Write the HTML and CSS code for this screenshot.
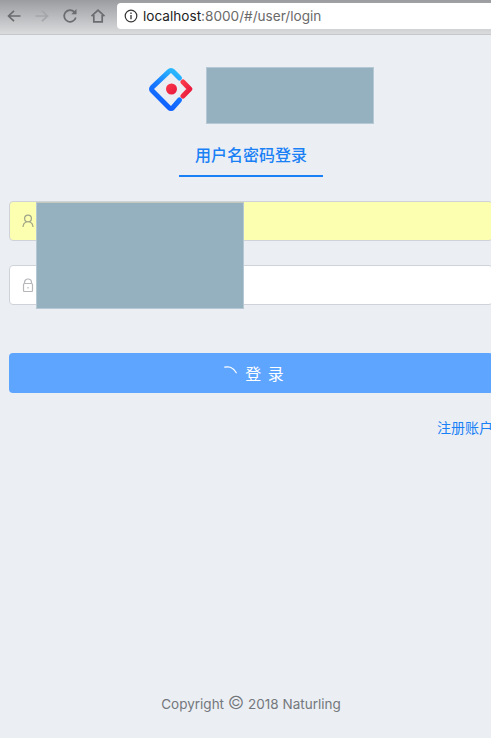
FILE: index.html
```html
<!DOCTYPE html>
<html lang="zh">
<head>
<meta charset="utf-8">
<title>Login</title>
<link rel="stylesheet" href="styles.css">
</head>
<body>
<div class="toolbar">
  <svg class="nav" width="16" height="16" viewBox="0 0 16 16"><path d="M14.500 8H2.500M8 2.800 2.500 8 8 13.200" class="st"/></svg>
  <svg class="nav fwd" width="16" height="16" viewBox="0 0 16 16"><path d="M1.500 8h12M8 2.800 13.500 8 8 13.200" class="st"/></svg>
  <svg class="nav reload" width="16" height="16" viewBox="0 0 16 16"><path d="M13.800 9.500A5.900 5.900 0 1 1 12.300 3.800" class="st"/><path d="M14.500 1v5.200H9.300z" class="fl"/></svg>
  <svg class="nav home" width="16" height="16" viewBox="0 0 16 16"><path d="M1.500 8.200 8 2.200l6.500 6M3.800 7v6.800h8.400V7" class="st"/></svg>
  <div class="omnibox">
    <svg width="14" height="14" viewBox="0 0 14 14"><circle cx="7" cy="7" r="5.800" fill="none" stroke="#333" stroke-width="1.200"/><path d="M7 6v4.200M7 3.600v1.300" stroke="#333" stroke-width="1.300"/></svg>
    <span class="url"><b>localhost</b>:8000/#/user/login</span>
  </div>
</div>
<main class="login">
  <div class="brand">
    <svg class="logo" width="44" height="44" viewBox="0 0 44 44">
      <defs>
        <linearGradient id="blue" x1="0.700" y1="0" x2="0.300" y2="1"><stop offset="0" stop-color="#29b6ff"/><stop offset="0.500" stop-color="#1677ff"/><stop offset="1" stop-color="#0f5bff"/></linearGradient>
        <linearGradient id="red" x1="0" y1="0" x2="1" y2="1"><stop offset="0" stop-color="#fa3a4a"/><stop offset="1" stop-color="#e8173c"/></linearGradient>
      </defs>
      <path d="M30.500 11 23.800 4.300a2.500 2.500 0 0 0-3.600 0L3.300 20.200a2.500 2.500 0 0 0 0 3.600L20.200 40.700a2.500 2.500 0 0 0 3.600 0L30.500 33" fill="none" stroke="url(#blue)" stroke-width="5" stroke-linecap="round" stroke-linejoin="round"/>
      <path d="M34 15l6.800 7-6.800 7" fill="none" stroke="url(#red)" stroke-width="5" stroke-linecap="round" stroke-linejoin="round"/>
      <circle cx="22.500" cy="22" r="5.500" fill="url(#red)"/>
    </svg>
    <div class="brand-name"></div>
  </div>
  <div class="tabs"><span class="tab">用户名密码登录</span></div>
  <div class="field autofill">
    <svg class="ficon" width="14" height="14" viewBox="0 0 14 14"><circle cx="7" cy="4.500" r="3.400" class="ic"/><path d="M2 13c.2-2.800 1.800-4.600 3.500-5M12 13c-.2-2.800-1.800-4.600-3.500-5" class="ic"/></svg>
  </div>
  <div class="field pwd">
    <svg class="ficon" width="14" height="14" viewBox="0 0 14 14"><rect x="2.500" y="5.500" width="9" height="8" rx="1" class="ic2"/><path d="M3.500 5.500V4.500a3.500 3.500 0 0 1 7 0v1" class="ic2"/><path d="M7 9v1.500" class="ic2"/></svg>
  </div>
  <div class="submit">
    <svg class="spin" width="13" height="8" viewBox="0 0 13 8"><path d="M0.700 1.200C4.500 0.200 9.500 1.500 12.300 6.800" fill="none" stroke="#fff" stroke-width="1.200" stroke-linecap="round"/></svg>
    <span class="submit-label">登 录</span>
  </div>
  <div class="links"><a class="register">注册账户</a></div>
  <div class="redact"></div>
  <footer class="copy">Copyright <span class="cc">©</span> 2018 Naturling</footer>
</main>
</body>
</html>
```
FILE: styles.css
```css
html, body { margin: 0; padding: 0; }
body {
  width: 491px;
  height: 738px;
  overflow: hidden;
  background: #ebeff4;
  font-family: "Noto Sans CJK SC", Inter, sans-serif;
}
.toolbar {
  height: 35px;
  box-sizing: border-box;
  display: flex;
  align-items: center;
  padding: 3px 0 5px 6px;
  background: linear-gradient(#9a9c9f 0, #a6a8ab 6px, #dadbdd 34px);
  border-bottom: 1px solid #c6c7c9;
}
.nav { flex: none; margin-right: 12px; }
.st { fill: none; stroke: #6a6c6f; stroke-width: 1.700; }
.fl { fill: #6a6c6f; }
.fwd .st { stroke: #a4a6a9; }
.home { margin-right: 11px; }
.omnibox {
  flex: 1;
  height: 26px;
  background: #fff;
  border-radius: 4px 0 0 4px;
  display: flex;
  align-items: center;
  padding-left: 7px;
  gap: 5px;
}
.url {
  font: 13.600px/26px Inter, "Liberation Sans", sans-serif;
  color: #6a6a6a;
  white-space: nowrap;
}
.url b { font-weight: 400; color: #1d1d1d; }
.login {
  position: relative;
  width: 484px;
  height: 703px;
  margin-left: 9px;
  display: flex;
  flex-direction: column;
}
.brand {
  display: flex;
  justify-content: center;
  align-items: flex-start;
  gap: 13px;
  height: 57px;
  margin-top: 32px;
  padding-left: 21px;
}
.logo { flex: none; }
.brand-name {
  width: 166px;
  height: 55px;
  background: #95b1bf;
  border: 1px solid #b5c8d3;
}
.tabs {
  margin-top: 16px;
  display: flex;
  justify-content: center;
}
.tab {
  width: 144px;
  height: 37px;
  box-sizing: border-box;
  text-align: center;
  font-size: 16px;
  font-weight: 500;
  line-height: 28px;
  color: #1a80f5;
  border-bottom: 2px solid #1a80f5;
}
.field {
  height: 40px;
  box-sizing: border-box;
  border: 1px solid #cfd3d9;
  border-radius: 4px;
  display: flex;
  align-items: center;
  padding-left: 11px;
}
.autofill { margin-top: 24px; background: #fcfeb0; }
.pwd { margin-top: 24px; background: #fff; }
.ficon { flex: none; }
.ic { fill: none; stroke: #a0a488; stroke-width: 1.200; }
.ic2 { fill: none; stroke: #b5b7ba; stroke-width: 1.200; }
.submit {
  margin-top: 48px;
  height: 40px;
  box-sizing: border-box;
  padding-left: 7px;
  border-radius: 4px;
  background: #5ea5ff;
  display: flex;
  align-items: center;
  justify-content: center;
  gap: 8px;
  color: #fff;
}
.spin { flex: none; position: relative; top: -3px; }
.submit-label {
  font-size: 16px;
  letter-spacing: 1px;
  word-spacing: 1px;
}
.links { margin-top: 21px; text-align: right; }
.register {
  font-size: 14px;
  line-height: 22px;
  color: #1a80f5;
}
.redact {
  position: absolute;
  left: 27px;
  top: 167px;
  width: 206px;
  height: 105px;
  background: #95b1bf;
  border: 1px solid #b5c8d3;
  border-top-color: #c5c9bb;
}
.copy {
  position: absolute;
  left: 0;
  right: 0;
  top: 658px;
  text-align: center;
  font: 13.500px/22px Inter, "Liberation Sans", sans-serif;
  color: #74777c;
}
.cc { font-size: 18px; line-height: 18px; font-weight: 300; }
```
